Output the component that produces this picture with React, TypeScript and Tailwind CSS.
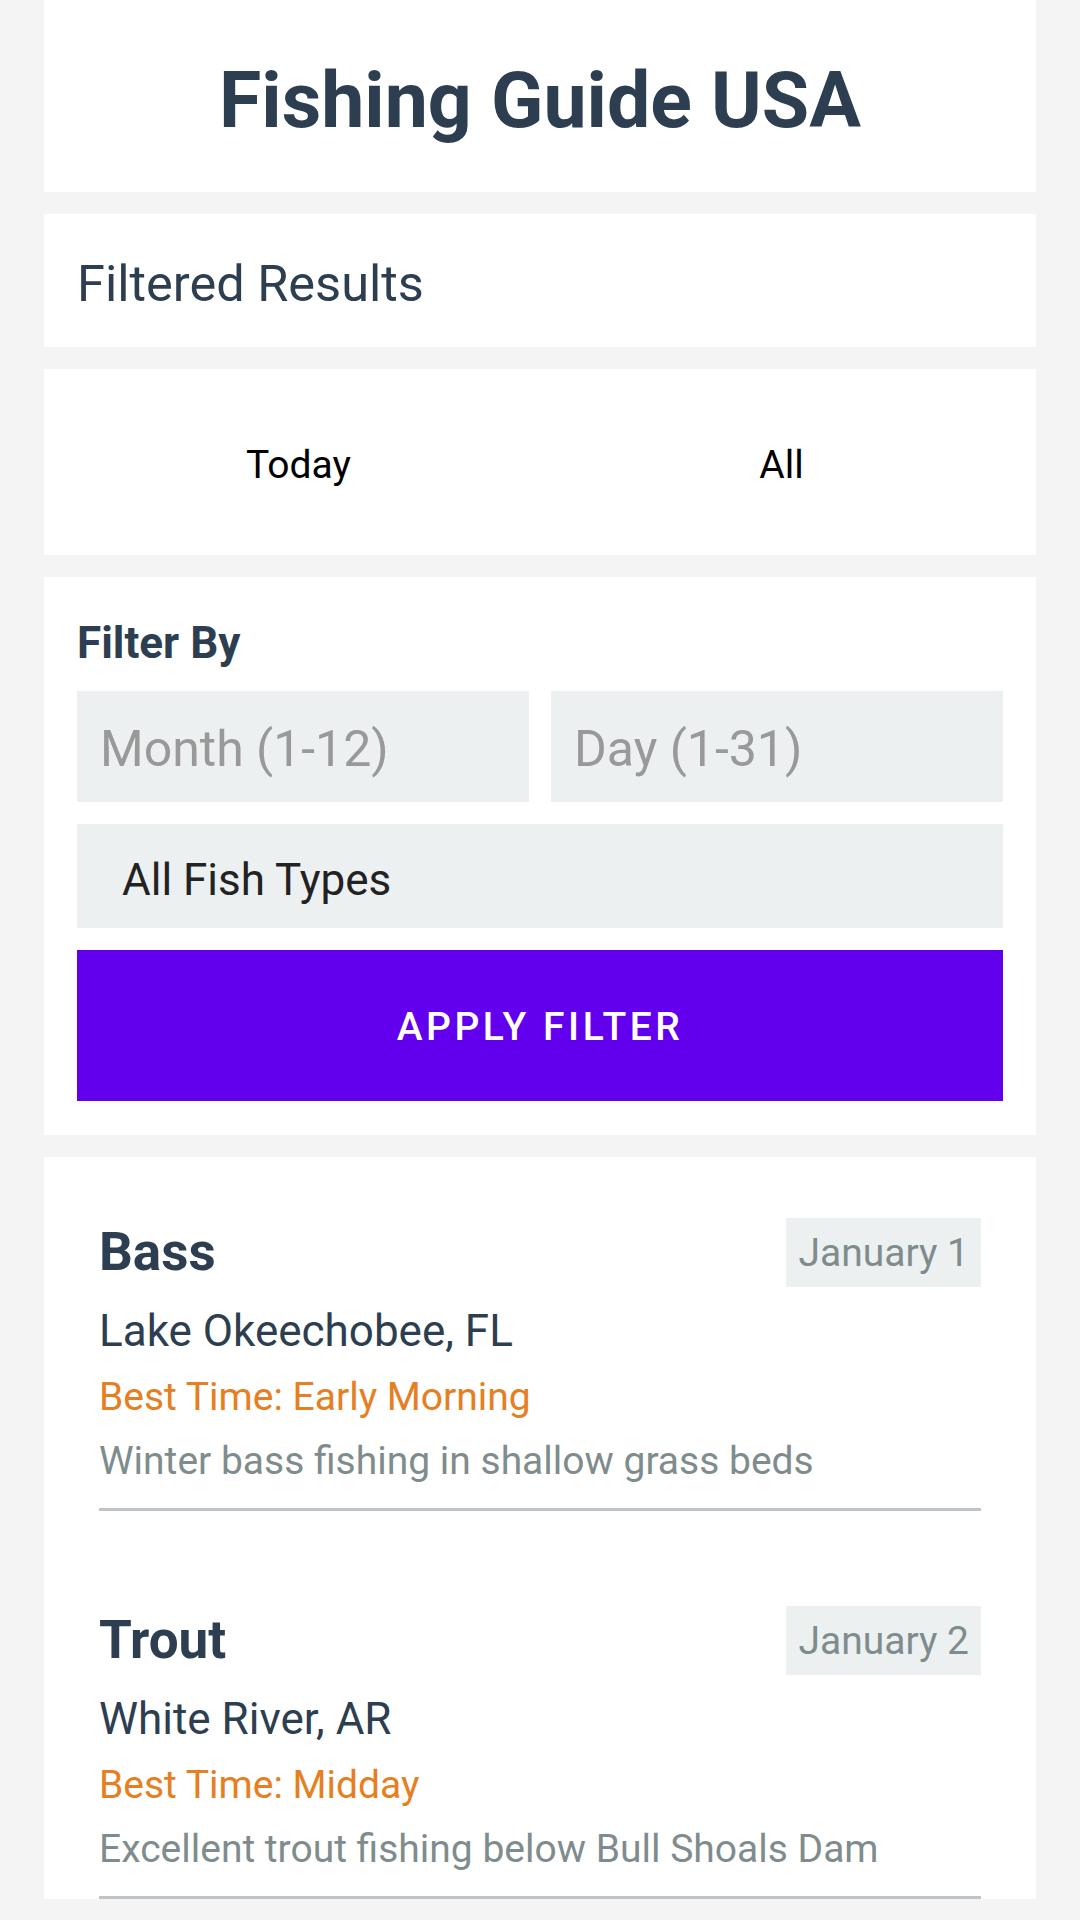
const spots = [
  {
    fish: "Bass",
    date: "January 1",
    place: "Lake Okeechobee, FL",
    time: "Early Morning",
    note: "Winter bass fishing in shallow grass beds",
  },
  {
    fish: "Trout",
    date: "January 2",
    place: "White River, AR",
    time: "Midday",
    note: "Excellent trout fishing below Bull Shoals Dam",
  },
];

export default function App() {
  return (
    <div className="min-h-[1920px] bg-[#f4f4f4] px-[44px] font-['Roboto',sans-serif]">
      {/* Header */}
      <div className="flex h-[192px] items-center justify-center bg-white pt-[10px]">
        <h1 className="text-[77px] font-bold leading-none text-[#2c3e50]">
          Fishing Guide USA
        </h1>
      </div>

      {/* Results title */}
      <div className="mt-[22px] flex h-[133px] items-center bg-white px-[33px] pt-[7px]">
        <h2 className="text-[50.5px] leading-none text-[#2c3e50]">
          Filtered Results
        </h2>
      </div>

      {/* Today / All */}
      <div className="mt-[22px] grid h-[186px] grid-cols-2 bg-white p-[13px]">
        <button className="pt-[7px] text-[39px] text-black">Today</button>
        <button className="pt-[7px] text-[39px] text-black">All</button>
      </div>

      {/* Filter */}
      <div className="mt-[22px] bg-white px-[33px] pt-[40px] pb-[34px]">
        <h3 className="text-[44px] font-bold leading-[52px] text-[#2c3e50]">
          Filter By
        </h3>

        <div className="mt-[22px] grid grid-cols-2 gap-[22px]">
          <input
            className="h-[111px] w-full bg-[#ecf0f1] px-[23px] pt-[5px] text-[50px] text-[#222] outline-none placeholder:text-[#999]"
            placeholder="Month (1-12)"
          />
          <input
            className="h-[111px] w-full bg-[#ecf0f1] px-[23px] pt-[5px] text-[50px] text-[#222] outline-none placeholder:text-[#999]"
            placeholder="Day (1-31)"
          />
        </div>

        <div className="mt-[22px] flex h-[104px] items-center bg-[#ecf0f1] px-[45px] pt-[7px]">
          <span className="text-[44px] text-[#222]">All Fish Types</span>
        </div>

        <button className="mt-[22px] flex h-[151px] w-full items-center justify-center bg-[#6200ee] pt-[4px] text-[39px] font-medium tracking-[0.09em] text-white">
          APPLY FILTER
        </button>
      </div>

      {/* Results list */}
      <div className="mt-[22px] flex flex-col gap-[95px] bg-white px-[55px] pt-[61px]">
        {spots.map((s) => (
          <div key={s.fish} className="border-b-[3px] border-[#bdc3c7] pb-[25px]">
            <div className="flex items-center justify-between">
              <span className="text-[53px] font-bold leading-none text-[#2c3e50]">
                {s.fish}
              </span>
              <span className="flex h-[69px] items-center bg-[#ecf0f1] px-[12px] pt-[2px] text-[39px] text-[#7f8c8d]">
                {s.date}
              </span>
            </div>
            <p className="mt-[18px] text-[44px] leading-[52px] text-[#2c3e50]">
              {s.place}
            </p>
            <p className="mt-[16px] text-[39px] leading-[48px] text-[#e67e22]">
              Best Time: {s.time}
            </p>
            <p className="mt-[18px] text-[39px] leading-[44px] text-[#7f8c8d]">
              {s.note}
            </p>
          </div>
        ))}
      </div>
    </div>
  );
}
